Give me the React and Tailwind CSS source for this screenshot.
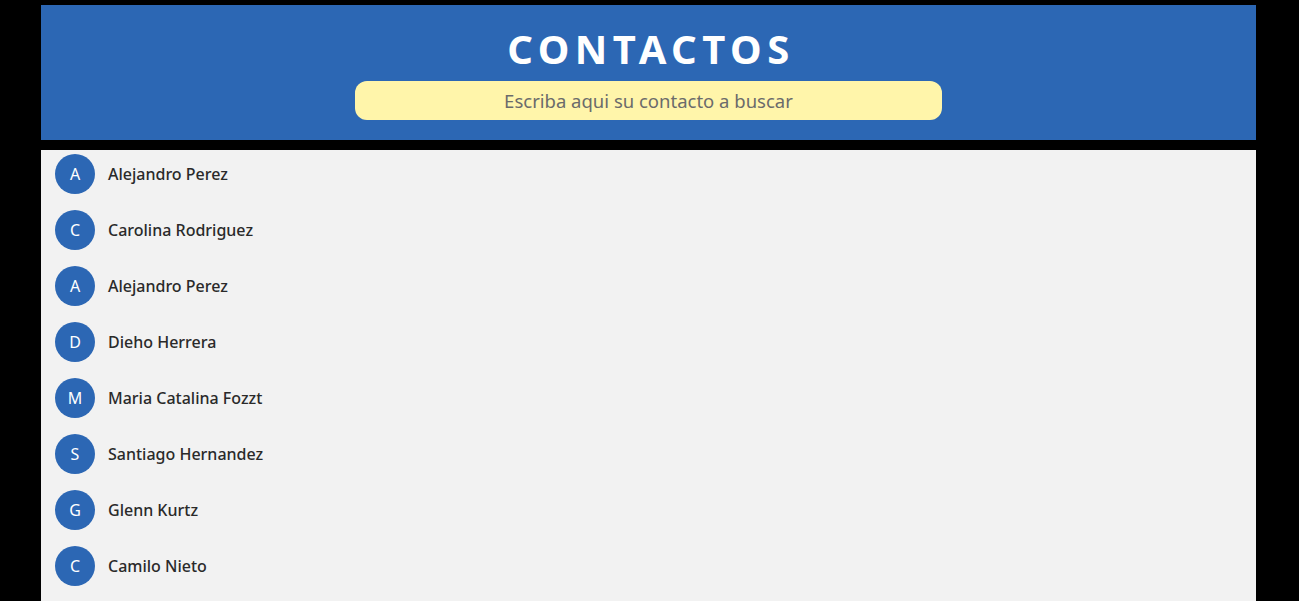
export default function App() {
  const contacts = [
    "Alejandro Perez",
    "Carolina Rodriguez",
    "Alejandro Perez",
    "Dieho Herrera",
    "Maria Catalina Fozzt",
    "Santiago Hernandez",
    "Glenn Kurtz",
    "Camilo Nieto",
  ];
  return (
    <div className="min-h-screen bg-black pt-[5px] pl-[41px] pr-[43px] font-['Noto_Sans',sans-serif]">
      <header className="bg-[#2c67b4] h-[135px] flex flex-col items-center pt-[20px]">
        <h1 className="text-white text-[40px] leading-[48px] font-bold tracking-[5.5px] pl-[5px]">CONTACTOS</h1>
        <input
          className="mt-[8px] w-[587px] h-[39px] rounded-[12px] bg-[#fff5aa] text-center text-[18.5px] text-[#555] placeholder:text-[#6b6b6b] outline-none"
          placeholder="Escriba aqui su contacto a buscar"
        />
      </header>
      <ul className="mt-[10px] bg-[#f2f2f2] pt-[4px] pl-[14px] h-[451px] overflow-hidden">
        {contacts.map((name, i) => (
          <li key={i} className="flex items-center h-[56px] pb-[16px]">
            <div className="w-[40px] h-[40px] rounded-full bg-[#2c67b4] text-white flex items-center justify-center text-[16px]">
              {name[0]}
            </div>
            <span className="ml-[13px] text-[16px] font-medium text-[#2a2a2a]">{name}</span>
          </li>
        ))}
      </ul>
    </div>
  );
}
